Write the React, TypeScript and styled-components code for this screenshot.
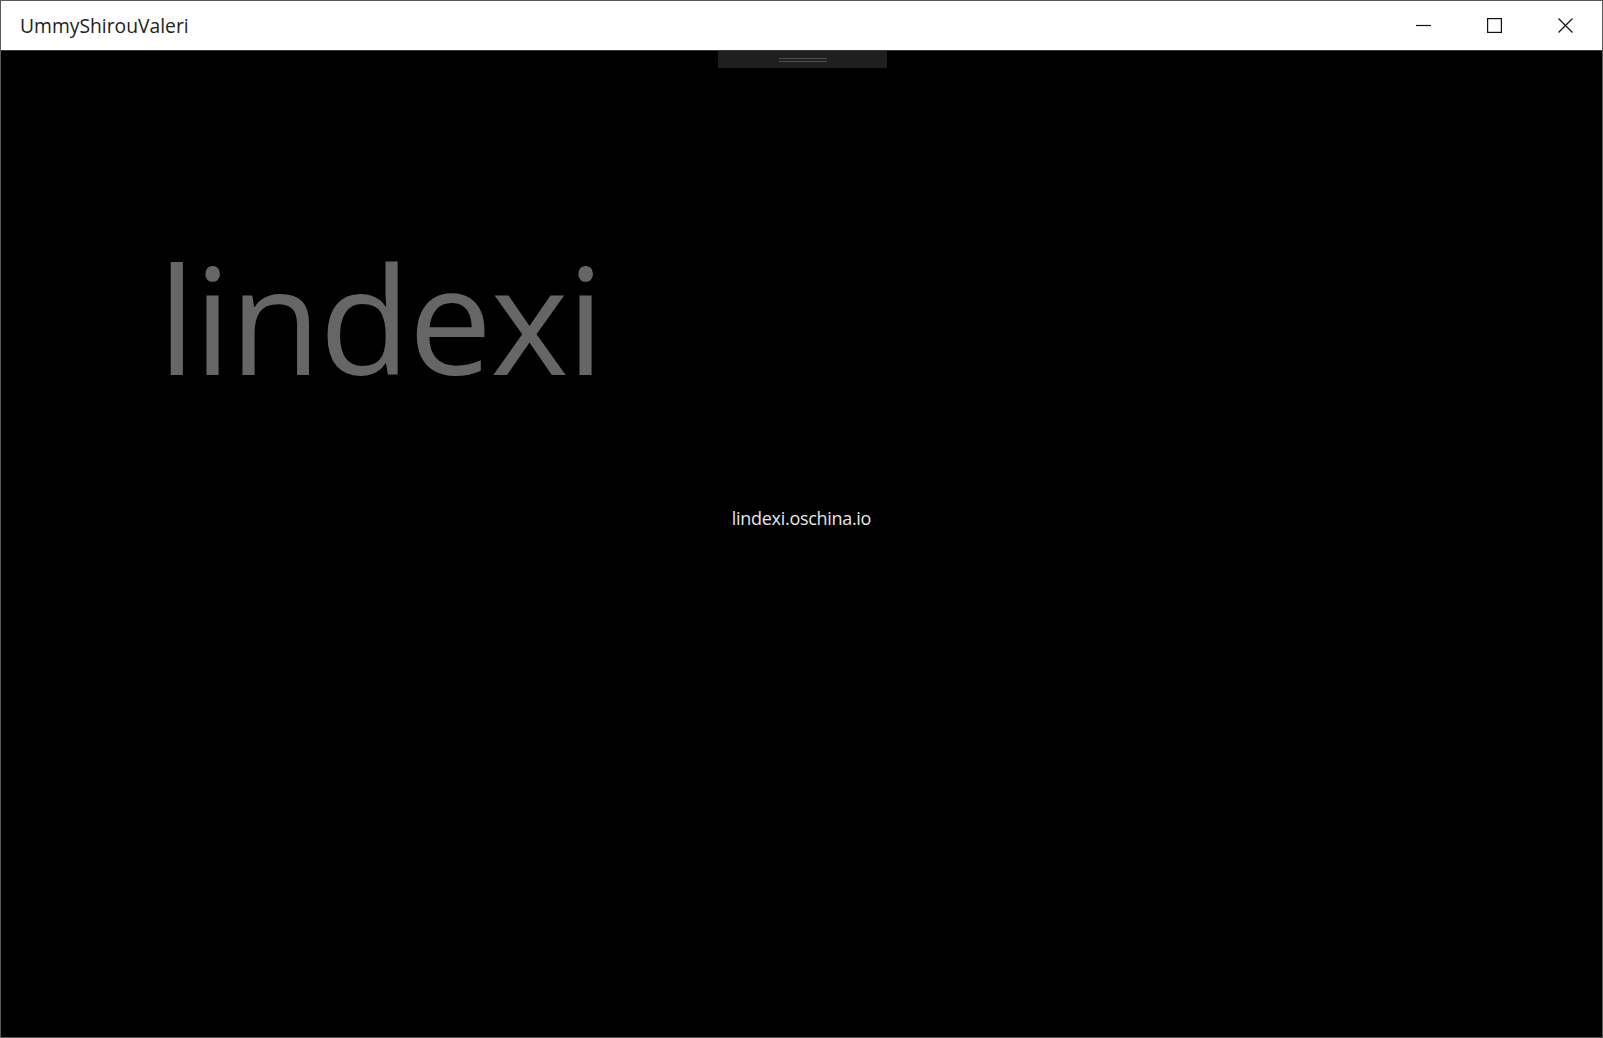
import React from "react";
import styled, { createGlobalStyle } from "styled-components";

const GlobalStyle = createGlobalStyle`
  html, body {
    margin: 0;
    padding: 0;
    background: #000;
  }
  body {
    font-family: "Open Sans", "Noto Sans", sans-serif;
  }
`;

const Window = styled.div`
  width: 1603px;
  height: 1038px;
  box-sizing: border-box;
  border: 1px solid #5a5a5a;
  display: flex;
  flex-direction: column;
  overflow: hidden;
`;

const TitleBar = styled.div`
  height: 49px;
  flex-shrink: 0;
  background: #fff;
  border-bottom: 1px solid #3a3a3a;
  display: flex;
  align-items: center;
`;

const Title = styled.div`
  flex: 1;
  padding-left: 19px;
  font-family: "Open Sans", "Noto Sans", sans-serif;
  font-size: 19.3px;
  color: #222;
`;

const Caption = styled.div`
  display: flex;
  height: 100%;
  padding-right: 1px;
`;

const CaptionButton = styled.div`
  width: 71px;
  height: 100%;
  display: flex;
  align-items: center;
  justify-content: center;
  color: #111;
`;

const Content = styled.div`
  position: relative;
  flex: 1;
  background: #000;
  display: flex;
  flex-direction: column;
`;

const Handle = styled.div`
  position: absolute;
  top: 0;
  left: 717px;
  width: 169px;
  height: 17px;
  background: #1f1f1f;
  display: flex;
  align-items: center;
  justify-content: center;
`;

const Grip = styled.div`
  width: 48px;
  height: 2px;
  border-top: 1px solid #4d4d4d;
  border-bottom: 1px solid #4d4d4d;
  margin-top: 1px;
`;

const BigName = styled.div`
  padding: 192px 0 0 157px;
  font-family: "Open Sans", "Noto Sans", sans-serif;
  font-size: 149px;
  line-height: 1;
  color: #666;
  letter-spacing: -1.8px;
`;

const Link = styled.div`
  margin-top: 114px;
  text-align: center;
  font-family: "Open Sans", "Noto Sans", sans-serif;
  font-size: 18px;
  color: #e6e6e6;
  letter-spacing: -0.3px;
`;

const App: React.FC = () => {
  return (
    <>
      <GlobalStyle />
      <Window>
        <TitleBar>
          <Title>UmmyShirouValeri</Title>
          <Caption>
            <CaptionButton>
              <svg width="15" height="15" viewBox="0 0 15 15">
                <line x1="0" y1="7.5" x2="15" y2="7.5" stroke="currentColor" strokeWidth="1.2" />
              </svg>
            </CaptionButton>
            <CaptionButton>
              <svg width="15" height="15" viewBox="0 0 15 15">
                <rect x="0.6" y="0.6" width="13.8" height="13.8" fill="none" stroke="currentColor" strokeWidth="1.2" />
              </svg>
            </CaptionButton>
            <CaptionButton>
              <svg width="15" height="15" viewBox="0 0 15 15">
                <path d="M0.5 0.5 L14.5 14.5 M14.5 0.5 L0.5 14.5" stroke="currentColor" strokeWidth="1.2" />
              </svg>
            </CaptionButton>
          </Caption>
        </TitleBar>
        <Content>
          <Handle>
            <Grip />
          </Handle>
          <BigName>lindexi</BigName>
          <Link>lindexi.oschina.io</Link>
        </Content>
      </Window>
    </>
  );
};

export default App;
